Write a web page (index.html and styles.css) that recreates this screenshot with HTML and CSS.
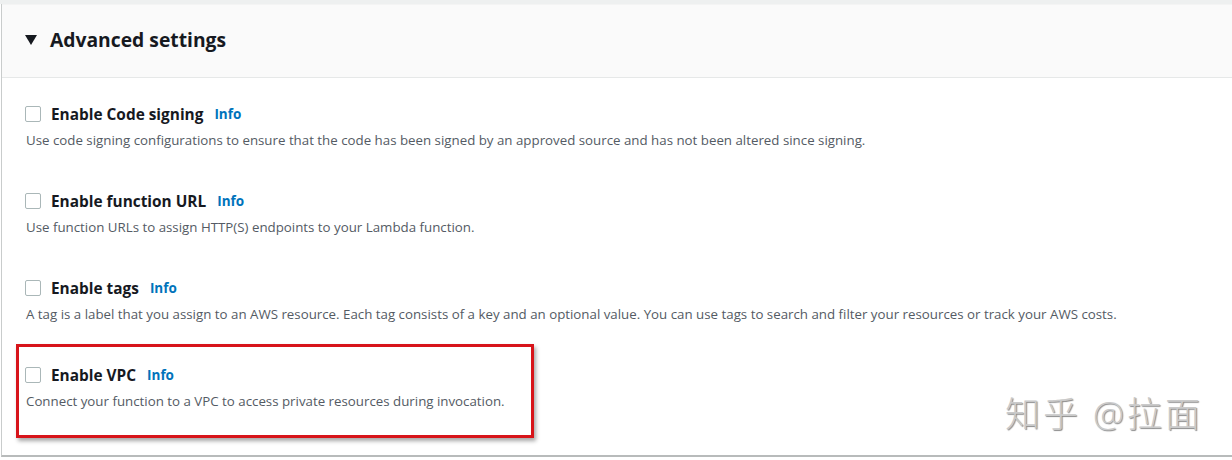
FILE: index.html
```html
<!DOCTYPE html>
<html lang="en">
<head>
  <meta charset="UTF-8">
  <title>Advanced settings</title>
  <link rel="stylesheet" href="styles.css">
</head>
<body>
  <div class="top-strip"></div>
  <section class="panel">
    <header class="panel-header">
      <span class="caret"></span>
      <h2>Advanced settings</h2>
    </header>
    <div class="panel-body">
      <div class="option">
        <label class="option-label">
          <span class="checkbox"></span>
          <span class="option-title">Enable Code signing</span>
          <a class="info" href="#">Info</a>
        </label>
        <p class="option-desc">Use code signing configurations to ensure that the code has been signed by an approved source and has not been altered since signing.</p>
      </div>
      <div class="option">
        <label class="option-label">
          <span class="checkbox"></span>
          <span class="option-title">Enable function URL</span>
          <a class="info" href="#">Info</a>
        </label>
        <p class="option-desc">Use function URLs to assign HTTP(S) endpoints to your Lambda function.</p>
      </div>
      <div class="option">
        <label class="option-label">
          <span class="checkbox"></span>
          <span class="option-title">Enable tags</span>
          <a class="info" href="#">Info</a>
        </label>
        <p class="option-desc">A tag is a label that you assign to an AWS resource. Each tag consists of a key and an optional value. You can use tags to search and filter your resources or track your AWS costs.</p>
      </div>
      <div class="option highlighted">
        <label class="option-label">
          <span class="checkbox"></span>
          <span class="option-title">Enable VPC</span>
          <a class="info" href="#">Info</a>
        </label>
        <p class="option-desc">Connect your function to a VPC to access private resources during invocation.</p>
      </div>
    </div>
  </section>
  <div class="watermark">知乎 @拉面</div>
</body>
</html>
```

FILE: styles.css
```css
body {
  margin: 0;
  font-family: 'Open Sans', 'Noto Sans CJK SC', sans-serif;
  color: #16191f;
  background: #fff;
  position: relative;
  height: 460px;
  overflow: hidden;
}

.top-strip {
  height: 4px;
  background: #eef0f0;
}

.panel {
  margin-left: 1px;
  border-left: 1px solid #c9cccc;
  border-bottom: 2px solid #b8bbbb;
  height: 453px;
  box-sizing: border-box;
  display: flex;
  flex-direction: column;
}

.panel-header {
  height: 74px;
  box-sizing: border-box;
  border-top: 1px solid #f4f4f4;
  border-bottom: 1px solid #e6e8e8;
  background: #fafafa;
  display: flex;
  align-items: center;
  padding-left: 23px;
  padding-bottom: 3px;
}

.caret {
  width: 0;
  height: 0;
  border-left: 6px solid transparent;
  border-right: 6px solid transparent;
  border-top: 10px solid #16191f;
  margin-right: 13px;
  margin-top: 1px;
}

.panel-header h2 {
  margin: 0;
  font-size: 19.3px;
  font-weight: 700;
}

.panel-body {
  padding: 25px 0 0 23px;
}

.option {
  height: 87px;
}

.option-label {
  display: flex;
  align-items: center;
  height: 22px;
}

.checkbox {
  width: 14px;
  height: 14px;
  border: 1px solid #aab7b8;
  border-radius: 2px;
  background: #fff;
  margin-right: 10px;
}

.option-title {
  font-size: 15.4px;
  font-weight: 700;
  margin-right: 11px;
}

.info {
  font-size: 13.5px;
  font-weight: 700;
  color: #0073bb;
  text-decoration: none;
}

.option-desc {
  margin: 6px 0 0 1px;
  font-size: 13.3px;
  color: #545b64;
}

.highlighted {
  position: relative;
}

.highlighted::before {
  content: "";
  position: absolute;
  left: -9px;
  top: -20px;
  width: 512px;
  height: 88px;
  border: 3px solid #d7141a;
  box-shadow: 2px 3px 4px rgba(0, 0, 0, 0.35);
}

.watermark {
  position: absolute;
  left: 1005px;
  top: 386px;
  font-size: 35px;
  font-weight: 300;
  color: #cacaca;
  text-shadow: 1px 1px 1px #8a8a8a;
  letter-spacing: 3px;
}
```
